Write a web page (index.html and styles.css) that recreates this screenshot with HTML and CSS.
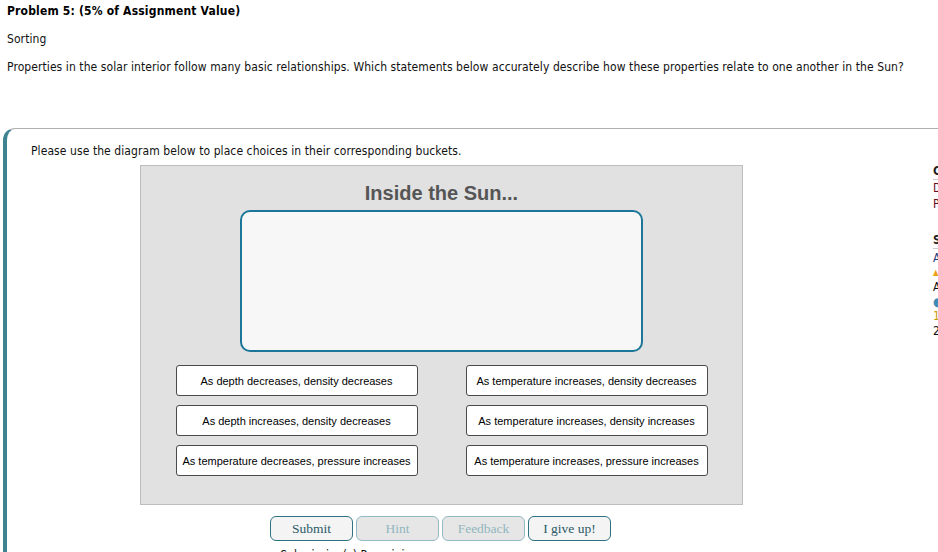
FILE: index.html
```html
<!DOCTYPE html>
<html>
<head>
<meta charset="utf-8">
<link rel="stylesheet" href="styles.css">
</head>
<body>
<div class="page">
  <h1 class="title">Problem 5: (5% of Assignment Value)</h1>
  <p class="type">Sorting</p>
  <p class="question">Properties in the solar interior follow many basic relationships. Which statements below accurately describe how these properties relate to one another in the Sun?</p>
  <section class="panel">
    <div class="main">
      <p class="instructions">Please use the diagram below to place choices in their corresponding buckets.</p>
      <div class="board">
        <h2 class="board-title">Inside the Sun...</h2>
        <div class="bucket"></div>
        <div class="choices">
          <div class="choice">As depth decreases, density decreases</div>
          <div class="choice">As temperature increases, density decreases</div>
          <div class="choice">As depth increases, density decreases</div>
          <div class="choice">As temperature increases, density increases</div>
          <div class="choice">As temperature decreases, pressure increases</div>
          <div class="choice">As temperature increases, pressure increases</div>
        </div>
      </div>
      <div class="actions">
        <button class="btn">Submit</button>
        <button class="btn btn-off">Hint</button>
        <button class="btn btn-off">Feedback</button>
        <button class="btn">I give up!</button>
      </div>
      <div class="remaining"><span class="warn">&#9650;</span> Submission(s) Remaining</div>
    </div>
    <aside class="side">
      <div class="side-head">Course Home</div>
      <div class="side-link red">Due Date</div>
      <div class="side-link red">Points</div>
      <div class="side-head side-gap">Scores</div>
      <div class="side-link blue">Assignments</div>
      <div class="side-icon orange">&#9650;</div>
      <div class="side-link dark">Answers</div>
      <div class="side-icon bluec">&#9679;</div>
      <div class="side-link gold">1</div>
      <div class="side-link dark">2</div>
    </aside>
  </section>
</div>
</body>
</html>
```
FILE: styles.css
```css
html, body {
  margin: 0;
  padding: 0;
  background: #ffffff;
  overflow: hidden;
}
body {
  width: 938px;
  height: 552px;
  font-family: "DejaVu Sans Condensed", "DejaVu Sans", sans-serif;
  font-size: 12px;
  line-height: 14px;
  color: #111;
  letter-spacing: 0.08px;
}
.page {
  padding: 4px 0 0 0;
}
.title {
  margin: 0 0 0 7px;
  font-size: 12px;
  line-height: 14px;
  font-weight: bold;
  color: #000;
  letter-spacing: 0.18px;
}
.type {
  margin: 14px 0 0 7px;
}
.question {
  margin: 14px 0 0 7px;
  white-space: nowrap;
}
.panel {
  margin: 54px 0 0 3px;
  border-top: 1px solid #b0b0b0;
  border-left: 4px solid #3d8390;
  border-top-left-radius: 12px;
  display: flex;
  width: 1000px;
  height: 500px;
}
.main {
  width: 922px;
  flex: none;
  padding: 15px 0 0 24px;
  box-sizing: border-box;
}
.instructions {
  margin: 0;
  white-space: nowrap;
}
.board {
  margin: 7px 0 0 109px;
  width: 603px;
  box-sizing: border-box;
  background: #e1e1e1;
  border: 1px solid #bdbdbd;
  padding: 15px 0 28px 0;
  letter-spacing: 0;
}
.board-title {
  margin: 0;
  text-align: center;
  font-family: "Liberation Sans", Arial, sans-serif;
  font-size: 20px;
  line-height: 24px;
  font-weight: bold;
  color: #555;
}
.bucket {
  margin: 5px auto 0 auto;
  width: 403px;
  height: 142px;
  box-sizing: border-box;
  background: #f7f7f7;
  border: 2px solid #1b7698;
  border-radius: 10px;
}
.choices {
  margin-top: 13px;
  display: grid;
  grid-template-columns: 242px 242px;
  column-gap: 48px;
  row-gap: 9px;
  justify-content: center;
}
.choice {
  height: 31px;
  box-sizing: border-box;
  background: #fff;
  border: 1px solid #4a4a4a;
  border-radius: 3px;
  display: flex;
  align-items: center;
  justify-content: center;
  font-family: "Liberation Sans", Arial, sans-serif;
  font-size: 11px;
  color: #000;
  white-space: nowrap;
}
.actions {
  margin: 11px 0 0 108px;
  width: 603px;
  display: flex;
  justify-content: center;
  gap: 3px;
}
.btn {
  width: 83px;
  height: 25px;
  box-sizing: border-box;
  background: #f4f4f4;
  border: 1px solid #2f7282;
  border-radius: 6px;
  font-family: "Liberation Serif", "Times New Roman", serif;
  font-size: 13.5px;
  color: #2b5a68;
  padding: 0;
  letter-spacing: 0;
}
.btn-off {
  background: #e6e6e6;
  border-color: #93b9c3;
  color: #92b6c0;
}
.remaining {
  margin: 7px 0 0 240px;
  font-size: 12px;
  color: #111;
}
.warn {
  color: #f0a020;
  font-size: 8px;
}
.side {
  padding-top: 35px;
  padding-left: 4px;
  width: 120px;
  flex: none;
}
.side-head {
  font-weight: bold;
  color: #222;
  border-bottom: 1px solid #ccc;
  line-height: 14px;
  padding-bottom: 1px;
}
.side-gap {
  margin-top: 21px;
}
.side-link {
  line-height: 15px;
}
.red { color: #6b0a14; margin-top: 1px; }
.blue { color: #1a3a7a; margin-top: 2px; }
.dark { color: #111; }
.gold { color: #c89a00; }
.orange { color: #f0a020; font-size: 8px; line-height: 12px; }
.bluec { color: #3e8db8; line-height: 18px; }
.side-icon { line-height: 14px; }
```
